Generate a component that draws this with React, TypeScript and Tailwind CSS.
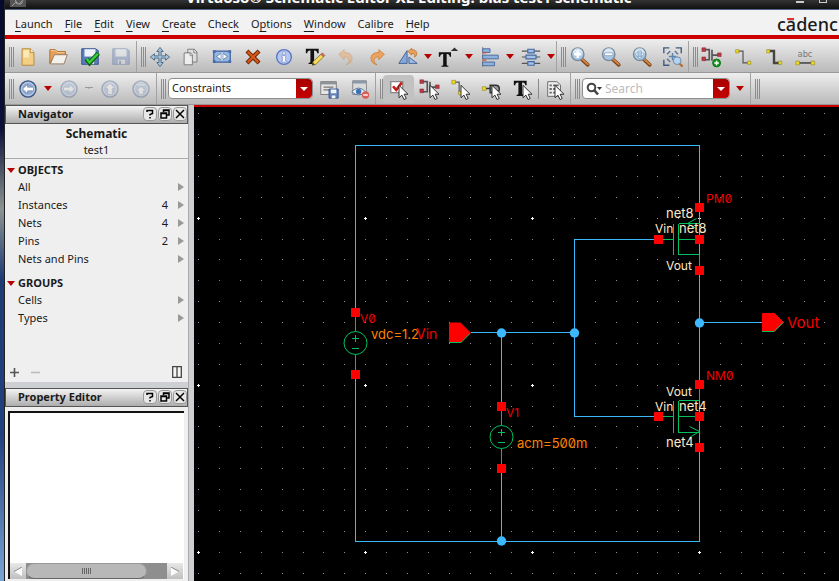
import React from 'react';

type IconName =
  | 'new' | 'open' | 'check' | 'save' | 'move' | 'copy' | 'stretch' | 'delete' | 'info' | 'editText'
  | 'undo' | 'redo' | 'rotate' | 'textSize' | 'align' | 'distribute' | 'zoomIn' | 'zoomOut' | 'zoomFit'
  | 'zoomArea' | 'instance' | 'wire' | 'wideWire' | 'label' | 'back' | 'forward' | 'up' | 'top'
  | 'saveView' | 'hideView' | 'selAll' | 'selInstance' | 'selWire' | 'selPin' | 'selText' | 'selList';

const Floppy = () => (
  <>
    <path d="M3 3h15l3 2v15H3z" fill="#5b7dba" stroke="#2f4d8c" />
    <path d="M6 3.500h12v8H6z" fill="#eef2fa" />
    <path d="M8 14.500h9V20H8z" fill="#dfe3ea" stroke="#3b5790" strokeWidth=".6" />
    <path d="M10 16h2v4h-2z" fill="#3b5790" />
  </>
);

const Cursor = () => (
  <path d="M12 8v13.500l3.200-2.800 2.300 4.800 2.400-1.200-2.300-4.600h4.200z" fill="#fff" stroke="#222" strokeWidth="1" />
);

const Lens = () => (
  <>
    <path d="M14 14.500l6.500 6" stroke="#7b4218" strokeWidth="4" strokeLinecap="round" />
    <path d="M14.500 14.500l6 5.500" stroke="#d58640" strokeWidth="2" strokeLinecap="round" />
    <circle cx="9.500" cy="9" r="6.800" fill="#a9c9e6" stroke="#7c8b99" strokeWidth="1.500" />
    <path d="M4 8a5.500 5.500 0 0 1 11 0q-5-2-11 0" fill="#d7e8f6" />
  </>
);

const Transistor = () => (
  <>
    <path d="M3 4h6v11H3M12 4v12M12 10h8" stroke="#555" strokeWidth="1.800" fill="none" />
    <path d="M1 2h4v4H1zM1 12h4v4H1zM18 7.500h4v4h-4z" fill="#b83a45" stroke="#8c2730" strokeWidth=".6" />
  </>
);

const Round = ({ d }: { d: string }) => (
  <>
    <circle cx="12" cy="12" r="8.800" fill="#8ea8d0" stroke="#38527f" strokeWidth="1.300" />
    <circle cx="12" cy="12" r="7" fill="none" stroke="#d8e3f4" strokeWidth=".8" />
    <path d={d} fill="#fff" stroke="#70819e" strokeWidth=".7" />
  </>
);

const UndoArrow = () => (
  <path d="M4 9l6-5v3.200c6-.5 9 2.800 8.500 7.300-.3 3-2.500 5-6.500 6 3-2 3.500-4 3-5.800-.5-2-2.200-2.900-5-2.700V15z" fill="#eba45f" stroke="#c77a30" strokeWidth=".8" />
);

const Dots = ({ d }: { d: string }) => <path d={d} fill="#ecd923" stroke="#8e8317" strokeWidth=".6" />;

const BoldT = () => (
  <path d="M2 3h14v5h-1.500c-.3-2-1-3-3-3H11v12c0 1 .6 1.400 2 1.500v1H5v-1c1.400-.1 2-.5 2-1.500V5h-.5c-2 0-2.700 1-3 3H2z" fill="#111" />
);

const drawings: Record<IconName, React.ReactNode> = {
  new: (
    <>
      <path d="M5.500 3h9l4 4v14h-13z" fill="#f2cf83" stroke="#b58537" />
      <path d="M7 4.500h6v8H7z" fill="#fbe9b8" />
      <path d="M14.500 3v4h4" fill="#fff5d8" stroke="#b58537" />
    </>
  ),
  open: (
    <>
      <path d="M2 19V4h6l2 2h9v5H7z" fill="#e5a257" stroke="#a8692b" />
      <path d="M3 5h5l2 2h8" stroke="#f7cf9c" fill="none" />
      <path d="M2.500 19.500L7 9.500h14l-3.500 10z" fill="#f3f1ee" stroke="#93785c" />
    </>
  ),
  check: (
    <>
      <Floppy />
      <path d="M8 14l3.500 4.500L21 8" stroke="#0d5f10" strokeWidth="5" fill="none" />
      <path d="M8.500 14l3 4L20.500 8.500" stroke="#39d23a" strokeWidth="2.600" fill="none" />
    </>
  ),
  save: <g opacity=".35"><Floppy /></g>,
  move: (
    <path d="M12 1.500l3.500 4.500h-2.300v4.800H18V8.500l4.500 3.500-4.500 3.500v-2.300h-4.800V18h2.300L12 22.500 8.500 18h2.300v-4.800H6v2.300L1.500 12 6 8.500v2.300h4.800V6H8.500z" fill="#a7c2d8" stroke="#3d5f7d" strokeWidth=".9" />
  ),
  copy: (
    <>
      <path d="M8.500 3.500h7l3 3v11h-10z" fill="#ddd" stroke="#777" />
      <path d="M4.500 7.500h7l2 2v11h-9z" fill="#eee" stroke="#777" />
      <path d="M15 3.500v4h3.500M11 7.500v3h2.500" fill="none" stroke="#777" strokeWidth=".8" />
    </>
  ),
  stretch: (
    <>
      <path d="M3 5.500h18v12H3z" fill="#92b7e2" stroke="#3e5f9b" strokeWidth="1.300" />
      <path d="M2 4.500h3v3H2zM19 4.500h3v3h-3zM2 15.500h3v3H2zM19 15.500h3v3h-3z" fill="#476baa" />
      <path d="M11 8v7l-5-3.500zM13 8v7l5-3.500z" fill="#fff" stroke="#44618f" strokeWidth=".7" />
      <path d="M12 7v9" stroke="#fff" />
    </>
  ),
  delete: (
    <>
      <path d="M7 7l10 10M17 7L7 17" stroke="#6f2500" strokeWidth="4.500" strokeLinecap="square" />
      <path d="M7 7l10 10M17 7L7 17" stroke="#d9571b" strokeWidth="2.500" strokeLinecap="square" />
    </>
  ),
  info: (
    <>
      <circle cx="12" cy="12" r="8" fill="#b5c6ef" stroke="#5b76c4" strokeWidth="1.500" />
      <path d="M10.500 6.500h3V9h-3zM9.500 10.500h4V16h1.500v1.500H9.500V16h1v-4h-1z" fill="#fff" stroke="#5b70ae" strokeWidth=".5" />
    </>
  ),
  editText: (
    <>
      <BoldT />
      <path d="M9 21l1-4L18.500 9l2.800 2.800L13 20z" fill="#f5d95a" stroke="#7b6420" strokeWidth=".8" />
      <path d="M18.500 9l1.500-1.500 2.800 2.800-1.500 1.500z" fill="#de6a68" stroke="#8c3937" strokeWidth=".6" />
      <path d="M9 21l.7-2.500L12 20z" fill="#222" />
    </>
  ),
  undo: <g opacity=".45"><UndoArrow /></g>,
  redo: <g transform="translate(24 0) scale(-1 1)"><UndoArrow /></g>,
  rotate: (
    <>
      <path d="M11 5v14H2z" fill="#86a7d7" stroke="#405f96" />
      <path d="M13 12v7h9z" fill="#9fbbe3" stroke="#405f96" />
      <path d="M12 6l4-3.500V4c4 0 6 2 5.500 5-.2 1.500-1 2.500-2.500 3 .8-2.600 0-4-3-4v2z" fill="#eaa15a" stroke="#b66c2a" strokeWidth=".8" />
    </>
  ),
  textSize: (
    <>
      <g transform="translate(-1 4) scale(.95)"><BoldT /></g>
      <path d="M14 5.500l4-4 4 4z" fill="#333" />
    </>
  ),
  align: (
    <>
      <path d="M4 1v22" stroke="#888" />
      <path d="M4 3h8v4H4zM4 10h17v4H4zM4 17.500h13v4H4z" fill="#8eb0dd" stroke="#466899" />
      <path d="M4 7.500h4M4 15.500h4" stroke="#e34b2c" strokeWidth="1.300" />
    </>
  ),
  distribute: (
    <>
      <path d="M2 5.500h20M2 12h20M2 19h20" stroke="#555" strokeWidth="1.300" />
      <path d="M8.500 3.500h7v4h-7zM6.500 10h11v4h-11zM8.500 17h7v4h-7z" fill="#a2c0e8" stroke="#44689f" strokeWidth="1.200" />
    </>
  ),
  zoomIn: (
    <>
      <Lens />
      <path d="M9.500 5v8M5.500 9h8" stroke="#fff" strokeWidth="2.600" />
    </>
  ),
  zoomOut: (
    <>
      <Lens />
      <path d="M5 7.500h9v3H5z" fill="#fff" stroke="#6b83a5" strokeWidth=".6" />
    </>
  ),
  zoomFit: (
    <>
      <Lens />
      <path d="M5 9l2.500-2.500v5zM14 9l-2.500-2.500v5zM9.500 4L7.500 6.200h4zM9.500 14l-2-2.200h4z" fill="#fff" stroke="#58799c" strokeWidth=".5" />
    </>
  ),
  zoomArea: (
    <>
      <path d="M2 8V2h6M15 2h6v6M2 15v6h6" stroke="#3f5b80" strokeWidth="1.500" fill="none" />
      <path d="M9 5.500l-3.500 3.500M14 5.500l3.500 3.500M9 17.500L5.500 14" stroke="#56759d" strokeWidth="1.500" fill="none" />
      <path d="M11.500 7.500v8M7.500 11.500h8" stroke="#5e83ae" strokeWidth="1.600" />
      <path d="M18.500 18.500l4 4" stroke="#b97031" strokeWidth="2.500" />
      <circle cx="16.500" cy="16" r="4.200" fill="#b5d3ee" stroke="#6385a8" />
    </>
  ),
  instance: (
    <>
      <Transistor />
      <circle cx="17" cy="18.500" r="4.300" fill="#149a1c" stroke="#086b10" />
      <path d="M17 16v5M14.500 18.500h5" stroke="#fff" strokeWidth="1.600" />
    </>
  ),
  wire: (
    <>
      <path d="M6 5.500h6v13h7" stroke="#555" strokeWidth="1.300" fill="none" />
      <Dots d="M4 4h3.500v3.500H4zM17 16.500h3.500V20H17z" />
    </>
  ),
  wideWire: (
    <>
      <path d="M6 5.500h6v13h7" stroke="#444" strokeWidth="2.600" fill="none" />
      <Dots d="M4 4h3.500v3.500H4zM17 16.500h3.500V20H17z" />
    </>
  ),
  label: (
    <>
      <path d="M4 18.500h17" stroke="#333" strokeWidth="1.500" />
      <Dots d="M2 16.500h4v4H2zM18.500 16.500h4v4h-4z" />
      <text x="12" y="12" textAnchor="middle" fontSize="9" fontFamily="DejaVu Sans" fill="#777">abc</text>
    </>
  ),
  back: <Round d="M6 12l5.500-5v3H18v4h-6.500v3z" />,
  forward: <g opacity=".35"><Round d="M18 12l-5.500-5v3H6v4h6.500v3z" /></g>,
  up: <g opacity=".35"><Round d="M12 6l5.500 5.500h-3V18h-5v-6.500h-3z" /></g>,
  top: <g opacity=".35"><Round d="M6.500 6.500h11v2h-11zM12 9.500l5.500 4.500h-3v4h-5v-4h-3z" /></g>,
  saveView: (
    <>
      <path d="M3 4h17v14H3z" fill="#e6e6e6" stroke="#777" />
      <path d="M3 4h17v3H3z" fill="#8e9399" />
      <path d="M6 10h11M6 13h7" stroke="#777" strokeWidth="1.500" />
      <path d="M12 12h10v10H12z" fill="#6482ba" stroke="#3a568e" />
      <path d="M14 12.500h6v4h-6zM15 19h4v3h-4z" fill="#f0f4fb" />
    </>
  ),
  hideView: (
    <>
      <path d="M4 3h15v15H4z" fill="#d9dadc" stroke="#888" />
      <path d="M4 3h15v3H4z" fill="#8b99aa" />
      <path d="M3 15q7.500-8 15 0-7.500 7-15 0z" fill="#e9f2fb" stroke="#536e91" />
      <circle cx="10.500" cy="14.800" r="3" fill="#3f72ac" />
      <circle cx="18" cy="18.500" r="4" fill="#d95c55" />
      <path d="M15.500 18.500h5" stroke="#fff" strokeWidth="1.600" />
    </>
  ),
  selAll: (
    <>
      <path d="M3 4h13v12H3z" fill="#fff" stroke="#888" strokeWidth="1.500" />
      <path d="M5.500 9l3.500 4L15 5" stroke="#cf1414" strokeWidth="2.800" fill="none" />
      <Cursor />
    </>
  ),
  selInstance: <><Transistor /><Cursor /></>,
  selWire: (
    <>
      <path d="M5 4.500h5v12h4" stroke="#555" strokeWidth="1.300" fill="none" />
      <Dots d="M2 2.500h4v4H2zM9.500 14.500h4v4h-4z" />
      <Cursor />
    </>
  ),
  selPin: (
    <>
      <path d="M4 11.500h6V8h6q4 0 4 4t-4 4h-6v-4" stroke="#333" strokeWidth="1.600" fill="#999" />
      <Dots d="M1.500 9.500h4v4h-4z" />
      <Cursor />
    </>
  ),
  selText: <><BoldT /><Cursor /></>,
  selList: (
    <>
      <path d="M4 4h10l4 3.500V20H4z" fill="#eee" stroke="#666" />
      <path d="M6 8h2.500M6 12h2.500M6 16h2.500M10 8h6M10 12h6M10 16h6" stroke="#666" strokeWidth="2" />
      <Cursor />
    </>
  ),
};

const ToolButton = ({ icon, title, active }: { icon: IconName; title: string; active?: boolean }) => (
  <button
    type="button"
    aria-label={title}
    className={`flex h-7 w-[31px] shrink-0 items-center justify-center rounded ${active ? 'bg-[#c2c2c2]' : ''}`}
  >
    <svg viewBox="0 0 24 24" className="size-[22px]" aria-hidden="true">
      {drawings[icon]}
    </svg>
  </button>
);

const DropArrow = ({ title, muted }: { title: string; muted?: boolean }) => (
  <button type="button" aria-label={title} className="flex h-7 w-2.5 shrink-0 items-center justify-center">
    <svg viewBox="0 0 8 5" className="h-[5px] w-2" aria-hidden="true">
      <path d={muted ? 'M0 1h8v1H5L4 3 3 2H0z' : 'M0 0h8L4 5z'} fill={muted ? '#999' : '#b80000'} />
    </svg>
  </button>
);

const ToolGroup = ({ children, last }: { children?: React.ReactNode; last?: boolean }) => (
  <div className={`flex h-full shrink-0 items-center pl-1 ${last ? '' : 'border-r border-[#a2a2a2]'}`}>
    <div className="-mr-0.5 flex h-5 w-[5px] shrink-0 justify-between">
      <span className="w-px bg-[#8c8c8c]" />
      <span className="w-px bg-[#8c8c8c]" />
      <span className="w-px bg-[#8c8c8c]" />
    </div>
    {children}
  </div>
);

const menus = [
  ['', 'L', 'aunch'],
  ['', 'F', 'ile'],
  ['', 'E', 'dit'],
  ['', 'V', 'iew'],
  ['', 'C', 'reate'],
  ['Chec', 'k', ''],
  ['O', 'p', 'tions'],
  ['', 'W', 'indow'],
  ['Cali', 'b', 're'],
  ['', 'H', 'elp'],
];

const MenuBar = () => (
  <nav className="flex h-[25px] shrink-0 items-center bg-[#f2f2f2] pt-[3px] pl-2.5">
    <div className="flex items-center gap-3">
      {menus.map(([before, key, after]) => (
        <button type="button" key={before + key + after} className="whitespace-nowrap">
          {before}
          <span className="underline underline-offset-[3px]">{key}</span>
          {after}
        </button>
      ))}
    </div>
    <div className="relative ml-auto w-[62px] text-lg leading-5 font-medium">
      cādenc
      <span className="absolute top-1 left-2.5 h-0.5 w-[7px] bg-[#d33]" />
    </div>
  </nav>
);

const MainToolbar = () => (
  <div className="flex h-[34px] shrink-0 items-center overflow-hidden border-b border-[#999] bg-linear-to-b from-[#eeeeee] to-[#bababa] pt-0.5">
    <ToolGroup>
      <ToolButton icon="new" title="New" />
      <ToolButton icon="open" title="Open" />
      <ToolButton icon="check" title="Check and save" />
      <ToolButton icon="save" title="Save" />
    </ToolGroup>
    <ToolGroup>
      <ToolButton icon="move" title="Move" />
      <ToolButton icon="copy" title="Copy" />
      <ToolButton icon="stretch" title="Stretch" />
      <ToolButton icon="delete" title="Delete" />
      <ToolButton icon="info" title="Properties" />
      <ToolButton icon="editText" title="Edit label" />
      <ToolButton icon="undo" title="Undo" />
      <ToolButton icon="redo" title="Redo" />
      <ToolButton icon="rotate" title="Rotate" />
      <DropArrow title="Rotate options" />
      <ToolButton icon="textSize" title="Text size" />
      <DropArrow title="Text size options" />
      <ToolButton icon="align" title="Align" />
      <DropArrow title="Align options" />
      <ToolButton icon="distribute" title="Distribute" />
      <DropArrow title="Distribute options" />
    </ToolGroup>
    <ToolGroup>
      <ToolButton icon="zoomIn" title="Zoom in" />
      <ToolButton icon="zoomOut" title="Zoom out" />
      <ToolButton icon="zoomFit" title="Zoom to fit" />
      <ToolButton icon="zoomArea" title="Zoom to area" />
    </ToolGroup>
    <ToolGroup last>
      <ToolButton icon="instance" title="Create instance" />
      <ToolButton icon="wire" title="Create wire" />
      <ToolButton icon="wideWire" title="Create wide wire" />
      <ToolButton icon="label" title="Create wire name" />
    </ToolGroup>
  </div>
);

const RedCap = () => (
  <span className="pointer-events-none flex w-4 shrink-0 items-center justify-center rounded-r bg-linear-to-b from-[#a80000] to-[#c40000]">
    <svg viewBox="0 0 8 4" className="h-1 w-2" aria-hidden="true">
      <path d="M0 0h8L4 4z" fill="#fff" />
    </svg>
  </span>
);

const SelectToolbar = () => (
  <div className="flex h-8 shrink-0 items-center overflow-hidden border-b border-[#999] bg-linear-to-b from-[#eeeeee] to-[#bababa]">
    <ToolGroup>
      <ToolButton icon="back" title="Back" />
      <DropArrow title="Back history" />
      <ToolButton icon="forward" title="Forward" />
      <DropArrow title="Forward history" muted />
      <ToolButton icon="up" title="Up" />
      <ToolButton icon="top" title="Top" />
    </ToolGroup>
    <ToolGroup>
      <div className="ml-1 flex h-[21px] w-[145px] rounded border border-[#8e8e8e] bg-white">
        <select aria-label="Workspace" className="min-w-0 flex-1 appearance-none bg-transparent pl-[3px]">
          <option>Constraints</option>
        </select>
        <RedCap />
      </div>
      <ToolButton icon="saveView" title="Save workspace" />
      <ToolButton icon="hideView" title="Hide assistants" />
    </ToolGroup>
    <ToolGroup>
      <ToolButton icon="selAll" title="Select all" active />
      <ToolButton icon="selInstance" title="Select instances" />
      <ToolButton icon="selWire" title="Select wires" />
      <ToolButton icon="selPin" title="Select pins" />
      <ToolButton icon="selText" title="Select labels" />
      <span className="h-5 w-px bg-[#888]" />
      <ToolButton icon="selList" title="Selection filter" />
    </ToolGroup>
    <ToolGroup>
      <div className="ml-1 flex h-[21px] w-[148px] items-stretch rounded border border-[#8e8e8e] bg-white">
        <svg viewBox="0 0 18 16" className="ml-0.5 h-4 w-[18px] shrink-0 self-center" aria-hidden="true">
          <circle cx="6.500" cy="6.500" r="3.800" fill="none" stroke="#444" strokeWidth="2" />
          <path d="M9.500 9.500l3.500 4" stroke="#444" strokeWidth="2.600" />
          <path d="M12 6h5l-2.500 3z" fill="#333" />
        </svg>
        <input
          type="text"
          aria-label="Search"
          placeholder="Search"
          className="min-w-0 flex-1 pl-0.5 text-xs outline-none placeholder:text-[#bcbcbc]"
        />
        <RedCap />
      </div>
      <div className="flex w-5 justify-center">
        <DropArrow title="Search options" />
      </div>
    </ToolGroup>
    <ToolGroup last />
  </div>
);

const HeaderButton = ({ title, children }: { title: string; children: React.ReactNode }) => (
  <button
    type="button"
    aria-label={title}
    className="flex size-3.5 items-center justify-center rounded border border-[#999] bg-[#e8e8e8]"
  >
    <svg viewBox="0 0 10 10" className="size-2.5 shrink-0" fill="none" stroke="#000" strokeWidth="1.500" aria-hidden="true">
      {children}
    </svg>
  </button>
);

const PanelHeader = ({ title }: { title: string }) => (
  <div className="flex h-[19px] shrink-0 items-center border border-[#555] bg-linear-to-b from-[#f4f4f4] to-[#adadad] pb-px pl-3">
    <h2 className="flex-1 font-bold">{title}</h2>
    <div className="flex gap-px">
      <HeaderButton title="Help">
        <path d="M2 3V1.500h5.500v3L5 5.500v1M5 8v1.500" />
      </HeaderButton>
      <HeaderButton title="Float">
        <path d="M3.500 3V1H9v5H7M1 4h5.500v5H1zM1 4.500h5.500M3.500 1.500H9" />
      </HeaderButton>
      <HeaderButton title="Close">
        <path d="M1 1l8 8M9 1L1 9" />
      </HeaderButton>
    </div>
  </div>
);

const SectionTitle = ({ title }: { title: string }) => (
  <h3 className="flex h-[17px] items-center gap-[3px] pt-px pl-0.5 font-bold">
    <svg viewBox="0 0 8 5" className="h-[5px] w-2" aria-hidden="true">
      <path d="M0 0h8L4 5z" fill="#b80000" />
    </svg>
    {title}
  </h3>
);

const TreeRow = ({ name, count }: { name: string; count?: number }) => (
  <li>
    <button type="button" className="flex h-[18px] w-full items-center pr-1 pl-[13px] text-left">
      <span className="flex-1">{name}</span>
      <span>{count}</span>
      <svg viewBox="0 0 6 8" className="ml-2.5 h-2 w-1.5" aria-hidden="true">
        <path d="M0 0v8l6-4z" fill="#999" />
      </svg>
    </button>
  </li>
);

const Navigator = () => (
  <section className="flex h-[277px] shrink-0 flex-col bg-[#efefef]">
    <PanelHeader title="Navigator" />
    <div className="flex h-[35px] shrink-0 flex-col items-center border-b border-[#aaa] pt-px">
      <p className="text-xs leading-[17px] font-bold">Schematic</p>
      <p className="leading-[15px]">test1</p>
    </div>
    <div className="flex flex-1 flex-col pt-0.5">
      <SectionTitle title="OBJECTS" />
      <ul>
        <TreeRow name="All" />
        <TreeRow name="Instances" count={4} />
        <TreeRow name="Nets" count={4} />
        <TreeRow name="Pins" count={2} />
        <TreeRow name="Nets and Pins" />
      </ul>
      <div className="h-1.5" />
      <SectionTitle title="GROUPS" />
      <ul>
        <TreeRow name="Cells" />
        <TreeRow name="Types" />
      </ul>
    </div>
    <div className="flex h-5 items-center gap-3 pr-1.5 pl-[5px]">
      <button type="button" aria-label="Add group">
        <svg viewBox="0 0 9 9" className="size-[9px]" aria-hidden="true">
          <path d="M4.500 0v9M0 4.500h9" stroke="#555" strokeWidth="1.600" />
        </svg>
      </button>
      <button type="button" aria-label="Remove group">
        <svg viewBox="0 0 9 9" className="size-[9px]" aria-hidden="true">
          <path d="M0 4.500h9" stroke="#bbb" strokeWidth="1.600" />
        </svg>
      </button>
      <button type="button" aria-label="Columns" className="ml-auto">
        <svg viewBox="0 0 10 12" className="h-3 w-2.5" aria-hidden="true">
          <path d="M.7.700h8.600v10.600H.7zM5 1v10" stroke="#444" strokeWidth="1.300" fill="#f6f6f6" />
        </svg>
      </button>
    </div>
  </section>
);

const PropertyEditor = () => (
  <section className="flex min-h-0 flex-1 flex-col bg-[#efefef]">
    <PanelHeader title="Property Editor" />
    <div className="mt-1 mr-1 mb-0.5 ml-[3px] flex flex-1 flex-col border-t-2 border-l-2 border-[#111] bg-white pr-px">
      <div className="mt-auto flex h-4 items-stretch bg-[#8e8e8e]">
        <button type="button" aria-label="Scroll left" className="flex w-4 items-center justify-center bg-linear-to-b from-[#e8e8e8] to-[#c0c0c0]">
          <svg viewBox="0 0 8 9" className="h-[9px] w-2" aria-hidden="true">
            <path d="M8 0v9L0 4.500z" fill="#fafafa" />
            <path d="M8 0L0 4.500" stroke="#888" />
          </svg>
        </button>
        <div className="flex w-[121px] items-center justify-center gap-px rounded-full border border-x-[#999] border-t-[#999] border-b-[#666] bg-[#b8b8b8]">
          {[0, 1, 2, 3, 4].map((i) => (
            <span key={i} className="h-1.5 w-px bg-[#666]" />
          ))}
        </div>
        <button type="button" aria-label="Scroll right" className="ml-auto flex w-4 items-center justify-center bg-linear-to-b from-[#e8e8e8] to-[#c0c0c0]">
          <svg viewBox="0 0 8 9" className="h-[9px] w-2" aria-hidden="true">
            <path d="M0 0v9l8-4.500z" fill="#fafafa" />
            <path d="M0 0l8 4.500" stroke="#888" />
          </svg>
        </button>
      </div>
    </div>
  </section>
);

// every eighth grid point is drawn as a bright cross
const GRID = 167 / 8;
let minorDots = '';
let majorDots = '';
for (let row = 0; row < 60; row++) {
  for (let col = 0; col < 100; col++) {
    const x = Math.round(4.2 + col * GRID);
    const y = Math.round(6.3 + row * GRID);
    if (col % 8 === 0 && row % 8 === 5) majorDots += `M${x - 1} ${y}h3v1h-3zM${x} ${y - 1}h1v3h-1z`;
    else minorDots += `M${x} ${y}h1v1h-1z`;
  }
}

const pins = [
  [161, 205], [161, 267], [307, 299], [307, 361], [505, 100], [464, 132], [505, 132],
  [505, 163], [505, 277], [464, 309], [505, 309], [505, 340],
];
const joints = [[307, 226], [380, 226], [505, 216], [307, 434]];
const sources = [[161, 236], [307, 330]];

const RED = 'fill-[#f40000]';
const ORANGE = 'fill-[#ff8000]';
const CREAM = 'fill-[#ffe8c8]';

const labels = [
  { x: 166, y: 216, text: 'V0', size: 'text-[12px]', fill: RED },
  { x: 177, y: 232, text: 'vdc=1.2', size: 'text-[13px]', fill: ORANGE },
  { x: 222, y: 232, text: 'Vin', size: 'text-[14px]', fill: RED },
  { x: 312, y: 310, text: 'V1', size: 'text-[12px]', fill: RED },
  { x: 323, y: 341, text: 'acm=500m', size: 'text-[13px]', fill: ORANGE },
  { x: 512, y: 96, text: 'PM0', size: 'text-[12px]', fill: RED },
  { x: 472, y: 111, text: 'net8', size: 'text-[13px]', fill: CREAM },
  { x: 461, y: 126, text: 'Vin', size: 'text-[12px]', fill: CREAM },
  { x: 485, y: 126, text: 'net8', size: 'text-[13px]', fill: CREAM },
  { x: 472, y: 163, text: 'Vout', size: 'text-[12px]', fill: CREAM },
  { x: 593, y: 221, text: 'Vout', size: 'text-[15px]', fill: RED },
  { x: 512, y: 273, text: 'NM0', size: 'text-[12px]', fill: RED },
  { x: 472, y: 289, text: 'Vout', size: 'text-[12px]', fill: CREAM },
  { x: 461, y: 304, text: 'Vin', size: 'text-[12px]', fill: CREAM },
  { x: 485, y: 304, text: 'net4', size: 'text-[13px]', fill: CREAM },
  { x: 472, y: 340, text: 'net4', size: 'text-[13px]', fill: CREAM },
];

const SchematicCanvas = () => (
  <main className="min-w-0 flex-1 overflow-hidden border-t-2 border-[#cc0000] bg-black">
    <svg className="block h-full w-full" role="img" aria-label="Schematic of test1">
      <path d={minorDots} fill="#8c8ca8" shapeRendering="crispEdges" />
      <path d={majorDots} fill="#fff" shapeRendering="crispEdges" />

      <g fill="none" stroke="#3bb8ff" shapeRendering="crispEdges" transform="translate(.5 .5)">
        <path d="M161 434V38h344v396z" />
        <path d="M276 225h104M307 225v209M464 132h-84v177h84M505 215h63" />
      </g>

      <g fill="none" stroke="#00c060">
        <g shapeRendering="crispEdges" transform="translate(.5 .5)">
          <path d="M161 205v20M161 247v20M307 299v20M307 341v20" />
          <path d="M464 132h15M479 116v31M484 116v31M484 116h21M484 132h21M484 147h21v16" />
          <path d="M464 309h15M479 293v32M484 293v32M505 277v16h-21M484 309h21M484 325h21" />
        </g>
        <path d="M502.500 111.500l-9 5 9 5M495.500 319.500l10 5-10 6" />
        {sources.map(([x, y]) => (
          <g key={x}>
            <circle cx={x + 0.5} cy={y} r="11.500" fill="#000" />
            <path d={`M${x - 3} ${y - 4.500}h7M${x + 0.5} ${y - 8}v7M${x - 3} ${y + 5.500}h7`} />
          </g>
        ))}
      </g>

      <path d="M255.500 216h11l10 10-10 9.500h-11z" fill="#f00" stroke="#f00" />
      <path d="M255 235.500h12l9-9" fill="none" stroke="#00c060" />
      <path d="M568.500 206.500h12l9 9-9 9h-12z" fill="#f00" stroke="#f00" />
      <path d="M568 224.500h12l9-9" fill="none" stroke="#00c060" />

      {joints.map(([x, y]) => (
        <circle key={`${x}-${y}`} cx={x + 0.5} cy={y} r="4.700" fill="#3bb8ff" />
      ))}
      {pins.map(([x, y]) => (
        <rect key={`${x}-${y}`} x={x - 4} y={y - 4} width="9" height="9" fill="#f00" />
      ))}
      {labels.map((label) => (
        <text
          key={`${label.x}-${label.y}`}
          x={label.x}
          y={label.y}
          className={`font-['Inter'] [font-feature-settings:'zero'] ${label.size} ${label.fill}`}
        >
          {label.text}
        </text>
      ))}
    </svg>
  </main>
);

const TitleBar = () => (
  <header className="flex h-2.5 shrink-0 items-end overflow-hidden border-b border-[#50668a] bg-linear-to-b from-[#333] to-[#111] pl-[5px] text-white">
    <svg viewBox="0 0 16 8" className="h-[7px] w-4 shrink-0 self-start bg-[#555]" aria-hidden="true">
      <path d="M1 7l5-5 3 3 5-5M5 0l2 5M9 4a2 2 0 1 0 3-3" stroke="#aaa" fill="none" />
    </svg>
    <h1 className="ml-40 text-[15px] leading-6 font-bold whitespace-nowrap">
      Virtuoso® Schematic Editor XL Editing: bias test1 schematic
    </h1>
    <div className="mr-3 ml-auto flex gap-[15px] self-start">
      <button type="button" aria-label="Minimize" className="h-[3px] w-2 border-b-2 border-[#ccc]" />
      <button type="button" aria-label="Maximize" className="h-[3px] w-2 border border-t-0 border-[#ccc]" />
    </div>
  </header>
);

const App: React.FC = () => (
  <div className="flex h-screen overflow-hidden bg-[linear-gradient(#060a2c,#0a1038_22%,#8b9391_36%,#1f3b75_48%,#20407e_75%,#79a5d4)] pl-1 font-['Noto_Sans','Open_Sans',sans-serif] text-[11px] text-[#1a1a1a]">
    <div className="flex min-w-0 flex-1 flex-col border-l border-[#222] bg-[#efefef]">
      <TitleBar />
      <MenuBar />
      <div className="h-1 shrink-0 bg-[#cc0000]" />
      <MainToolbar />
      <SelectToolbar />
      <div className="flex min-h-0 flex-1">
        <aside className="flex w-[183px] shrink-0 flex-col">
          <Navigator />
          <div className="h-1.5 shrink-0 bg-[#cdcfd3]" />
          <PropertyEditor />
        </aside>
        <div className="w-1.5 shrink-0 border-l border-[#aaa] bg-[#cdcfd5]" />
        <SchematicCanvas />
      </div>
    </div>
  </div>
);

export default App;
